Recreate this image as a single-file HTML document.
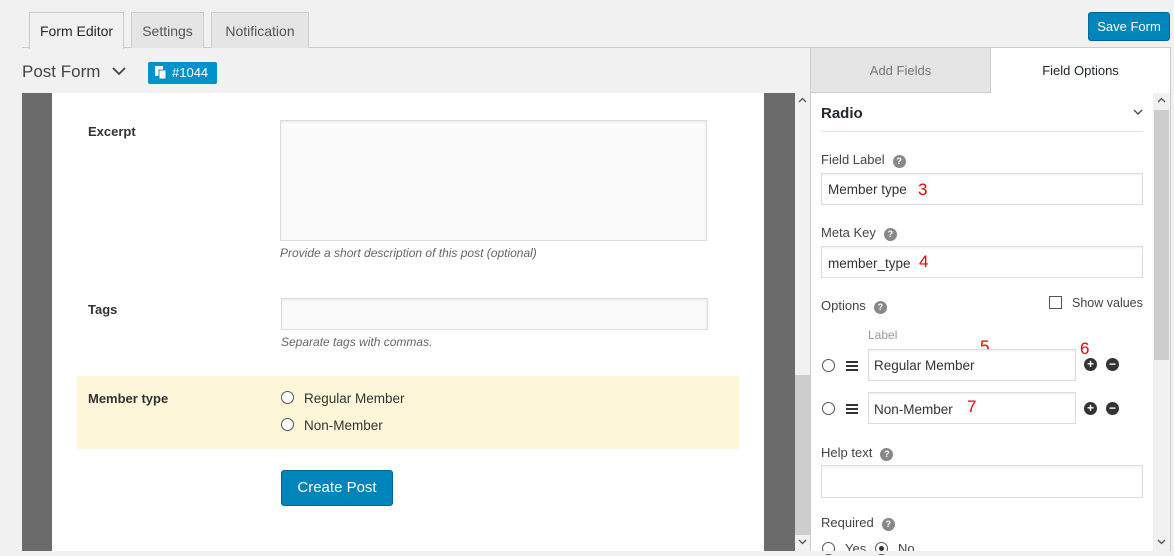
<!DOCTYPE html>
<html><head><style>
*{box-sizing:border-box;margin:0;padding:0}
body{width:1174px;height:554px;background:#f1f1f1;font-family:"Liberation Sans",sans-serif;position:relative;overflow:hidden;color:#23282d;font-size:13px}
.a{position:absolute}
.tab{position:absolute;top:12px;height:36px;border:1px solid #ccc;border-bottom:none;background:#e5e5e5;color:#555;font-size:14px;line-height:36px;text-align:center}
.inp{position:absolute;border:1px solid #ddd;background:#fff;box-shadow:inset 0 1px 2px rgba(0,0,0,.07)}
.lbl{position:absolute;color:#444;font-size:13px}
.q{display:inline-block;width:13px;height:13px;border-radius:50%;background:#888;color:#fff;font-size:9px;line-height:13px;text-align:center;font-weight:bold;margin-left:8px;vertical-align:0}
.red{color:#e00;font-size:17px;position:absolute}
.rad{position:absolute;width:13px;height:13px;border:1px solid #555;border-radius:50%;background:#fff}
.ham{position:absolute;width:12px;height:10px;border-top:2px solid #333;border-bottom:2px solid #333}
.ham:after{content:"";position:absolute;left:0;right:0;top:2px;border-top:2px solid #333}
.pm{position:absolute;width:13px;height:13px;border-radius:50%;background:#333;color:#fff;font-size:12px;line-height:13px;text-align:center;font-weight:bold}
.t{font-size:13.5px;color:#333}
</style></head><body>
<div class="a" style="left:22px;top:47px;width:1148px;border-top:1px solid #ccc"></div>
<div class="tab" style="left:29px;width:95px;background:#f1f1f1;color:#23282d;height:37px">Form Editor</div>
<div class="tab" style="left:131px;width:73px">Settings</div>
<div class="tab" style="left:211px;width:98px">Notification</div>
<div class="a" style="left:1088px;top:12px;width:82px;height:29px;background:#0085ba;border:1px solid #006799;border-radius:3px;color:#fff;font-size:13px;line-height:27px;text-align:center">Save Form</div>
<div class="a" style="left:22px;top:62px;font-size:17px;color:#444">Post Form</div>
<svg class="a" style="left:112px;top:67px" width="14" height="9"><path d="M1 1l6 6 6-6" stroke="#444" stroke-width="1.8" fill="none"/></svg>
<div class="a" style="left:148px;top:62px;width:69px;height:22px;background:#0092ca;border-radius:2px;color:#fff;font-size:13px;line-height:22px;padding-left:24px">#1044</div>
<svg class="a" style="left:155px;top:66px" width="12" height="14"><rect x="0" y="0" width="8" height="10" fill="#fff"/><rect x="4" y="4" width="7" height="9" fill="#fff" stroke="#0092ca" stroke-width="1"/></svg>
<div class="a" style="left:22px;top:93px;width:30px;height:461px;background:#6b6b6b"></div>
<div class="a" style="left:52px;top:93px;width:712px;height:461px;background:#fff"></div>
<div class="a" style="left:764px;top:93px;width:31px;height:461px;background:#6b6b6b"></div>
<div class="a" style="left:795px;top:93px;width:15px;height:457px;background:#f1f1f1"></div>
<div class="a" style="left:795px;top:375px;width:15px;height:160px;background:#cdcdcd"></div>
<svg class="a" style="left:798px;top:97px" width="9" height="6"><path d="M1 5l3.5-3.5L8 5" stroke="#555" stroke-width="1.3" fill="none"/></svg>
<svg class="a" style="left:798px;top:539px" width="9" height="6"><path d="M1 1l3.5 3.5L8 1" stroke="#555" stroke-width="1.3" fill="none"/></svg>
<div class="a" style="left:88px;top:124px;font-weight:bold;font-size:13px;color:#333">Excerpt</div>
<div class="inp" style="left:280px;top:120px;width:427px;height:121px;background:#fafafa"></div>
<div class="a" style="left:280px;top:246px;font-style:italic;font-size:12px;color:#666">Provide a short description of this post (optional)</div>
<div class="a" style="left:88px;top:302px;font-weight:bold;font-size:13px;color:#333">Tags</div>
<div class="inp" style="left:281px;top:298px;width:427px;height:32px;background:#fafafa"></div>
<div class="a" style="left:281px;top:335px;font-style:italic;font-size:12px;color:#666">Separate tags with commas.</div>
<div class="a" style="left:77px;top:376px;width:662px;height:73px;background:#fef6d9"></div>
<div class="a" style="left:88px;top:391px;font-weight:bold;font-size:13px;color:#333">Member type</div>
<div class="rad" style="left:281px;top:391px"></div>
<div class="a t" style="left:304px;top:391px">Regular Member</div>
<div class="rad" style="left:281px;top:418px"></div>
<div class="a t" style="left:304px;top:418px">Non-Member</div>
<div class="a" style="left:281px;top:470px;width:112px;height:36px;background:#0085ba;border:1px solid #006799;border-radius:3px;color:#fff;font-size:15px;line-height:34px;text-align:center">Create Post</div>
<div class="a" style="left:810px;top:47px;width:361px;height:505px;background:#fff;border:1px solid #ccc"></div>
<div class="a" style="left:811px;top:48px;width:180px;height:45px;background:#e5e5e5;border-right:1px solid #ccc;border-bottom:1px solid #ccc;color:#777;font-size:13px;line-height:45px;text-align:center">Add Fields</div>
<div class="a" style="left:991px;top:48px;width:179px;height:45px;color:#23282d;font-size:13px;line-height:45px;text-align:center">Field Options</div>
<div class="a" style="left:1153px;top:93px;width:17px;height:458px;background:#f1f1f1"></div>
<div class="a" style="left:1154px;top:110px;width:15px;height:250px;background:#cdcdcd"></div>
<svg class="a" style="left:1157px;top:97px" width="9" height="6"><path d="M1 5l3.5-3.5L8 5" stroke="#555" stroke-width="1.3" fill="none"/></svg>
<svg class="a" style="left:1157px;top:539px" width="9" height="6"><path d="M1 1l3.5 3.5L8 1" stroke="#555" stroke-width="1.3" fill="none"/></svg>
<div class="a" style="left:821px;top:105px;font-size:15px;font-weight:bold;color:#23282d">Radio</div>
<svg class="a" style="left:1133px;top:109px" width="10" height="7"><path d="M1 1l4 4 4-4" stroke="#444" stroke-width="1.3" fill="none"/></svg>
<div class="a" style="left:821px;top:131px;width:322px;border-top:1px solid #e5e5e5"></div>
<div class="lbl" style="left:821px;top:152px">Field Label<span class="q">?</span></div>
<div class="inp" style="left:821px;top:173px;width:322px;height:32px"></div>
<div class="a t" style="left:828px;top:182px">Member type</div>
<div class="red" style="left:918px;top:180px">3</div>
<div class="lbl" style="left:821px;top:225px">Meta Key<span class="q">?</span></div>
<div class="inp" style="left:821px;top:246px;width:322px;height:32px"></div>
<div class="a t" style="left:828px;top:256px">member_type</div>
<div class="red" style="left:919px;top:252px">4</div>
<div class="lbl" style="left:821px;top:298px">Options<span class="q">?</span></div>
<div class="a" style="left:1049px;top:296px;width:13px;height:13px;border:1px solid #555;background:#fff"></div>
<div class="lbl" style="left:1072px;top:296px;font-size:12.5px">Show values</div>
<div class="a" style="left:868px;top:328px;color:#999;font-size:12px">Label</div>
<div class="red" style="left:980px;top:337px">5</div>
<div class="red" style="left:1080px;top:339px">6</div>
<div class="rad" style="left:822px;top:359px"></div>
<div class="ham" style="left:846px;top:361px"></div>
<div class="inp" style="left:868px;top:349px;width:208px;height:32px"></div>
<div class="a t" style="left:874px;top:358px">Regular Member</div>
<div class="pm" style="left:1084px;top:358px">+</div>
<div class="pm" style="left:1106px;top:358px">&minus;</div>
<div class="rad" style="left:822px;top:402px"></div>
<div class="ham" style="left:846px;top:404px"></div>
<div class="inp" style="left:868px;top:392px;width:208px;height:32px"></div>
<div class="a t" style="left:874px;top:402px">Non-Member</div>
<div class="red" style="left:967px;top:397px">7</div>
<div class="pm" style="left:1084px;top:402px">+</div>
<div class="pm" style="left:1106px;top:402px">&minus;</div>
<div class="lbl" style="left:821px;top:445px">Help text<span class="q">?</span></div>
<div class="inp" style="left:821px;top:465px;width:322px;height:33px"></div>
<div class="lbl" style="left:821px;top:515px">Required<span class="q">?</span></div>
<div class="rad" style="left:822px;top:542px"></div>
<div class="a" style="left:845px;top:541px;color:#444">Yes</div>
<div class="rad" style="left:875px;top:542px"><div style="margin:3px;width:5px;height:5px;border-radius:50%;background:#333"></div></div>
<div class="a" style="left:898px;top:541px;color:#444">No</div>
<div class="a" style="left:0;top:551px;width:1174px;height:3px;background:#f1f1f1"></div>
</body></html>
